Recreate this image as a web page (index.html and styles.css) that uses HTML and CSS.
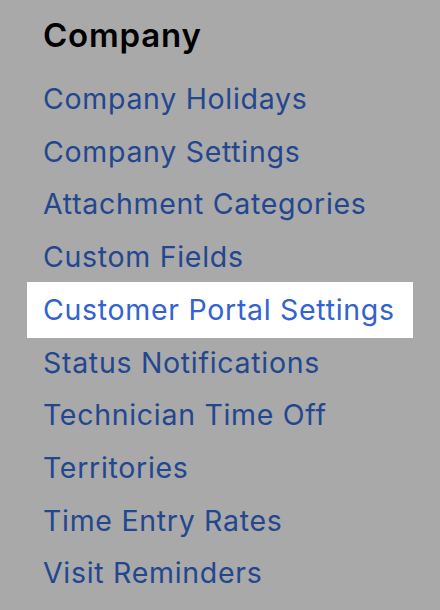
FILE: index.html
```html
<!DOCTYPE html>
<html lang="en">
<head>
  <meta charset="UTF-8" />
  <meta name="viewport" content="width=device-width, initial-scale=1.0"/>
  <title>Company</title>
  <link rel="stylesheet" href="styles.css">
</head>
<body>

<!-- Settings menu -->
<div class="section">
  <h2 class="section-title">Company</h2>
  <ul class="links">
    <li><a href="#">Company Holidays</a></li>
    <li><a href="#">Company Settings</a></li>
    <li><a href="#">Attachment Categories</a></li>
    <li><a href="#">Custom Fields</a></li>
    <li class="highlight"><a href="#">Customer Portal Settings</a></li>
    <li><a href="#">Status Notifications</a></li>
    <li><a href="#">Technician Time Off</a></li>
    <li><a href="#">Territories</a></li>
    <li><a href="#">Time Entry Rates</a></li>
    <li><a href="#">Visit Reminders</a></li>
  </ul>
</div>

</body>
</html>
```

FILE: styles.css
```css
body {
  margin: 0;
  padding: 0;
  background: #a9a9a9;
  font-family: Inter, "Noto Sans", sans-serif;
  overflow: hidden;
}

.section {
  padding: 13px 0 0 43px;
}

.section-title {
  margin: 0 0 15px;
  font-size: 33px;
  font-weight: 600;
  letter-spacing: 0.8px;
  color: #000;
  line-height: 44px;
}

.links {
  list-style: none;
  margin: 0;
  padding: 0;
}

.links li {
  height: 52.7px;
  display: flex;
  align-items: center;
}

.links a {
  font-size: 28.5px;
  letter-spacing: 0.7px;
  color: #23478f;
  text-decoration: none;
}

.links li.highlight {
  background: #fff;
  margin-left: -16px;
  padding-left: 16px;
  width: 370px;
  height: 56px;
  margin-top: -1px;
  margin-bottom: -2px;
}

.links li.highlight a {
  color: #3263d0;
}
```
